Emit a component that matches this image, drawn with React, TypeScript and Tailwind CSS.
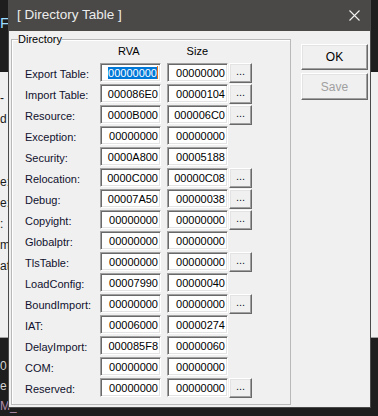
import React from 'react'

type Row = { label: string; rva: string; size: string; more: boolean }

const rows: Row[] = [
  { label: 'Export Table:', rva: '00000000', size: '00000000', more: true },
  { label: 'Import Table:', rva: '000086E0', size: '00000104', more: true },
  { label: 'Resource:', rva: '0000B000', size: '000006C0', more: true },
  { label: 'Exception:', rva: '00000000', size: '00000000', more: false },
  { label: 'Security:', rva: '0000A800', size: '00005188', more: false },
  { label: 'Relocation:', rva: '0000C000', size: '00000C08', more: true },
  { label: 'Debug:', rva: '00007A50', size: '00000038', more: true },
  { label: 'Copyight:', rva: '00000000', size: '00000000', more: true },
  { label: 'Globalptr:', rva: '00000000', size: '00000000', more: false },
  { label: 'TlsTable:', rva: '00000000', size: '00000000', more: true },
  { label: 'LoadConfig:', rva: '00007990', size: '00000040', more: false },
  { label: 'BoundImport:', rva: '00000000', size: '00000000', more: true },
  { label: 'IAT:', rva: '00006000', size: '00000274', more: false },
  { label: 'DelayImport:', rva: '000085F8', size: '00000060', more: false },
  { label: 'COM:', rva: '00000000', size: '00000000', more: false },
  { label: 'Reserved:', rva: '00000000', size: '00000000', more: true },
]

const sunken =
  'flex h-[19px] w-[61px] items-center justify-end border border-t-[#a0a0a0] border-l-[#a0a0a0] border-b-white border-r-white bg-white pr-[2px] shadow-[inset_1px_1px_0_#696969,inset_-1px_-1px_0_#e3e3e3]'

const raised =
  'border border-t-white border-l-white border-b-[#696969] border-r-[#696969] bg-[#f0f0f0] shadow-[inset_-1px_-1px_0_#a0a0a0,inset_1px_1px_0_#e3e3e3]'

function Field({ value, focused }: { value: string; focused?: boolean }) {
  return (
    <div className={sunken}>
      {focused ? (
        <span className="flex items-center">
          <span className="bg-[#0078d7] leading-[12px] text-white">{value}</span>
          <span className="h-[13px] w-px bg-[#e07020]" />
        </span>
      ) : (
        <span className="leading-[12px] text-black">{value}</span>
      )}
    </div>
  )
}

export default function App() {
  return (
    <div
      className="relative h-[416px] w-[378px] overflow-hidden bg-[#1e1e1e] text-[11px]"
      style={{ fontFamily: '"Liberation Sans", Arial, sans-serif' }}
    >
      {/* app behind the dialog */}
      <div className="flex h-full flex-col">
        <div className="h-[73px] pt-[12px] text-[15px] text-[#9cdcfe]">F</div>
        <div className="h-[272px] border-b border-[#a0a0a0] bg-[#f0f0f0] pt-[16px] text-[12px] leading-[21px] text-[#1a1a1a]">
          <div>-</div>
          <div>d</div>
          <div>&nbsp;</div>
          <div>&nbsp;</div>
          <div>e:</div>
          <div>e:</div>
          <div>:</div>
          <div>m</div>
          <div>at</div>
        </div>
        <div className="flex-1 pt-[18px] text-[12px] leading-[20px] text-[#d4d4d4]">
          <div>0</div>
          <div>e</div>
          <div className="text-[#b48ead]">M_</div>
        </div>
      </div>

      {/* dialog */}
      <div className="absolute left-[8px] top-0 flex h-[408px] w-[363px] flex-col border border-t-0 border-[#4a4a4a] bg-[#f0f0f0]">
        <div className="flex h-[31px] shrink-0 items-center justify-between bg-[#4a4947] pl-[8px] pr-[9px]">
          <span className="text-[13.5px] text-[#ececec]">[ Directory Table ]</span>
          <svg width="11" height="11" viewBox="0 0 11 11" className="mr-[1px]">
            <path d="M0.5 0.5 L10.5 10.5 M10.5 0.5 L0.5 10.5" stroke="#f2f2f2" strokeWidth="1.1" />
          </svg>
        </div>

        <div className="flex flex-1">
          {/* group box */}
          <div className="relative ml-[2px] mt-[8px] mb-[2px] w-[280px] border border-[#b9b9b9] shadow-[inset_1px_1px_0_#ffffff]">
            <span className="absolute -top-[8px] left-[6px] bg-[#f0f0f0] leading-[14px] text-black">Directory</span>
            <div className="flex h-[18px] items-end text-black">
              <span className="ml-[106px] leading-[13px]">RVA</span>
              <span className="ml-[47px] leading-[13px]">Size</span>
            </div>
            <div className="mt-[4px] flex flex-col">
              {rows.map((r, i) => (
                <div key={r.label} className="flex h-[21px] items-center">
                  <span className="ml-[13px] w-[75px] pt-[3px] text-[#10102e]">{r.label}</span>
                  <Field value={r.rva} focused={i === 0} />
                  <div className="ml-[6px]">
                    <Field value={r.size} />
                  </div>
                  {r.more && (
                    <button className={`ml-px flex h-[20px] w-[23px] items-center justify-center pb-[2px] text-[#10102e] ${raised}`}>
                      ...
                    </button>
                  )}
                </div>
              ))}
            </div>
          </div>

          {/* buttons */}
          <div className="ml-[10px] mt-[13px] flex flex-col gap-[3px]">
            <button className={`h-[26px] w-[67px] text-[12px] text-black ${raised}`}>OK</button>
            <button className={`h-[27px] w-[67px] text-[12px] text-[#a0a0a0] ${raised}`}>Save</button>
          </div>
        </div>
      </div>
    </div>
  )
}
